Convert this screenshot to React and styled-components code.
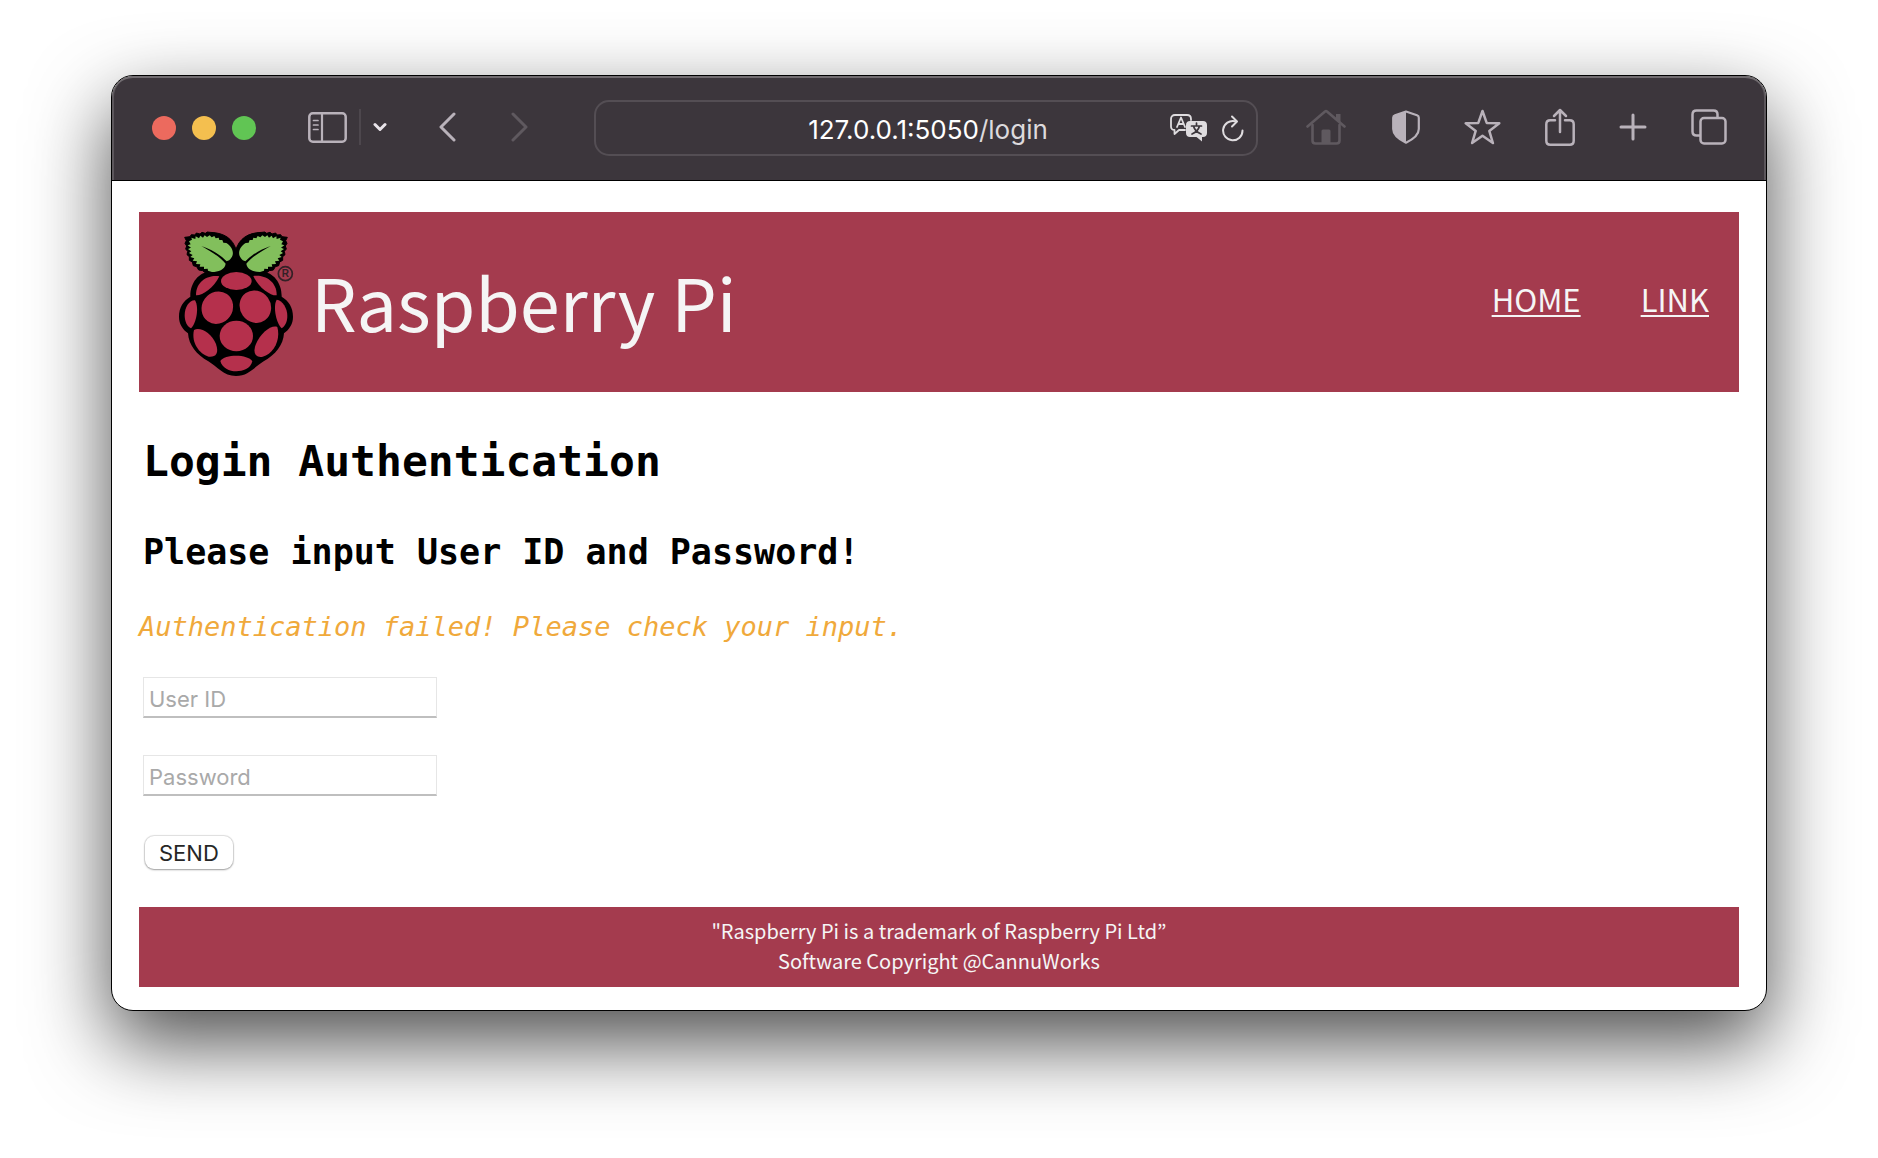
import React from "react";
import styled, { createGlobalStyle } from "styled-components";

const App = () => {
  return (
    <>
      <GlobalStyle />
      <Desktop>
        <Window>
          <Toolbar>
            <WindowButtons>
              <WindowButton type="button" aria-label="Close" $color="#ec6a5e" />
              <WindowButton type="button" aria-label="Minimize" $color="#f4bf4f" />
              <WindowButton type="button" aria-label="Zoom" $color="#61c554" />
            </WindowButtons>

            <SidebarGroup>
              <IconButton type="button" aria-label="Show sidebar">
                <SidebarIcon />
              </IconButton>
              <Divider />
              <IconButton type="button" aria-label="Tab groups" $color="#e9e4ea">
                <svg width="14" height="10" viewBox="0 0 14 10">
                  <Line d="M2 2.500l5 5 5-5" strokeWidth="3" />
                </svg>
              </IconButton>
            </SidebarGroup>

            <HistoryGroup>
              <IconButton type="button" aria-label="Back">
                <svg width="17" height="30" viewBox="0 0 17 30">
                  <Line d="M15 2L2 15l13 13" strokeWidth="3" />
                </svg>
              </IconButton>
              <IconButton type="button" aria-label="Forward" $color="#5f595f">
                <svg width="17" height="30" viewBox="0 0 17 30">
                  <Line d="M2 2l13 13L2 28" strokeWidth="3" />
                </svg>
              </IconButton>
            </HistoryGroup>

            <AddressBar>
              <Address type="button">
                127.0.0.1:5050<AddressPath>/login</AddressPath>
              </Address>
              <AddressActions>
                <IconButton type="button" aria-label="Translate" $color="#dfdcdf">
                  <TranslateIcon />
                </IconButton>
                <IconButton type="button" aria-label="Reload" $color="#dfdcdf">
                  <ReloadIcon />
                </IconButton>
              </AddressActions>
            </AddressBar>

            <ToolGroup>
              <IconButton type="button" aria-label="Home" $color="#5f595f">
                <HomeIcon />
              </IconButton>
              <IconButton type="button" aria-label="Privacy report">
                <ShieldIcon />
              </IconButton>
              <IconButton type="button" aria-label="Bookmarks">
                <StarIcon />
              </IconButton>
              <IconButton type="button" aria-label="Share">
                <ShareIcon />
              </IconButton>
              <IconButton type="button" aria-label="New tab">
                <svg width="28" height="28" viewBox="0 0 28 28">
                  <Line d="M14 2v24M2 14h24" strokeWidth="3" />
                </svg>
              </IconButton>
              <IconButton type="button" aria-label="Show tabs">
                <TabsIcon />
              </IconButton>
            </ToolGroup>
          </Toolbar>

          <Page>
            <Header>
              <Brand>
                <RaspberryLogo />
                <BrandName>Raspberry Pi</BrandName>
              </Brand>
              <Nav>
                <NavLink href="#home">HOME</NavLink>
                <NavLink href="#link">LINK</NavLink>
              </Nav>
            </Header>

            <Content>
              <Title>Login Authentication</Title>
              <SubTitle>Please input User ID and Password!</SubTitle>
              <ErrorText>Authentication failed! Please check your input.</ErrorText>
              <Form onSubmit={(e) => e.preventDefault()}>
                <Field type="text" placeholder="User ID" aria-label="User ID" />
                <Field type="password" placeholder="Password" aria-label="Password" />
                <SendBtn type="submit">SEND</SendBtn>
              </Form>
            </Content>

            <Footer>
              <p>"Raspberry Pi is a trademark of Raspberry Pi Ltd”</p>
              <p>Software Copyright @CannuWorks</p>
            </Footer>
          </Page>
        </Window>
      </Desktop>
    </>
  );
};

const Line = (props) => (
  <path
    fill="none"
    stroke="currentColor"
    strokeWidth="2.200"
    strokeLinecap="round"
    strokeLinejoin="round"
    {...props}
  />
);

const SidebarIcon = () => (
  <svg width="39" height="31" viewBox="0 0 39 31">
    <rect x="1.300" y="1.300" width="36.400" height="28.400" rx="3.500" fill="none" stroke="currentColor" strokeWidth="2.500" />
    <Line d="M14 1v29" />
    <Line d="M5.500 8.500h4.500M5.500 13h4.500M5.500 17.500h4.500" strokeWidth="1.700" />
  </svg>
);

const TranslateIcon = () => (
  <svg width="38" height="28" viewBox="0 0 38 28">
    <Line d="M15 16H9l-4.500 4V16C2 16 1 14.500 1 12.500V5C1 2.500 2.500 1 5 1h12c2.500 0 4 1.500 4 4v1" strokeWidth="1.800" />
    <Line d="M7 13l4-9.500 4 9.500M8.500 10h5" strokeWidth="1.800" />
    <path
      d="M20 7h13c2.500 0 4 1.500 4 4v8c0 2.500-1.500 4-4 4h-1v4.500L26.500 23H20c-2.500 0-4-1.500-4-4v-8c0-2.500 1.500-4 4-4z"
      fill="currentColor"
    />
    <path
      d="M26.500 9v2.500M21.500 12h10M23.500 12c1 4 4 6.500 7.500 8M29.500 12c-1 4-4 6.500-7.500 8"
      fill="none"
      stroke="#3c363c"
      strokeWidth="1.700"
      strokeLinecap="round"
    />
  </svg>
);

const ReloadIcon = () => (
  <svg width="22" height="27" viewBox="0 0 22 27">
    <Line d="M13 6.200A9.700 9.700 0 1 0 20.500 15.500" strokeWidth="2" />
    <Line d="M10 1.500l5 5-5 5" strokeWidth="2" />
  </svg>
);

const HomeIcon = () => (
  <svg width="42" height="36" viewBox="0 0 42 36">
    <Line d="M1.500 17.500L19 2.500q1-.8 2 0l17.500 15" strokeWidth="2.600" />
    <Line d="M6.500 16v15.500q0 3 3 3h21q3 0 3-3V16" strokeWidth="2.600" />
    <path d="M30 5h4.500v10L30 11z" fill="currentColor" />
    <path d="M15.500 34V22q0-1.500 1.500-1.500h6q1.500 0 1.500 1.500v12z" fill="currentColor" />
  </svg>
);

const ShieldIcon = () => (
  <svg width="28" height="34" viewBox="0 0 28 34">
    <Line d="M14 1.500l11 3.700q1.800.6 1.800 2.500V19q0 7.500-12.800 13.700Q1.200 26.500 1.200 19V7.700q0-1.900 1.800-2.500z" />
    <path d="M14 1.500L3 5.200q-1.800.6-1.800 2.500V19q0 7.500 12.800 13.700z" fill="currentColor" />
  </svg>
);

const StarIcon = () => (
  <svg width="37" height="36" viewBox="0 0 37 36">
    <Line
      d="M18.500 2l4.200 11.900 12.600.3-10 7.700 3.600 12.100-10.400-7.200-10.400 7.200 3.600-12.100-10-7.700 12.600-.3z"
      strokeWidth="2.500"
    />
  </svg>
);

const ShareIcon = () => (
  <svg width="30" height="38" viewBox="0 0 30 38">
    <Line d="M10 12.300H5.300q-4 0-4 4v16.400q0 4 4 4h19.400q4 0 4-4V16.300q0-4-4-4H20" strokeWidth="2.500" />
    <Line d="M15 24V2M9 8l6-6 6 6" strokeWidth="2.500" />
  </svg>
);

const TabsIcon = () => (
  <svg width="36" height="36" viewBox="0 0 36 36">
    <rect x="9.500" y="9" width="25" height="25.500" rx="3.500" fill="none" stroke="currentColor" strokeWidth="2.500" />
    <Line d="M9 26.500H5.500q-4 0-4-4v-17q0-4 4-4h17q4 0 4 4V9" strokeWidth="2.500" strokeLinecap="butt" />
  </svg>
);

const RaspberryLogo = () => (
  <Logo viewBox="147 96 342 432" role="img" aria-label="Raspberry Pi logo">
    {/* berry body */}
    <path
      d="M318 196C300 214 270 216 240 214C205 218 180 250 181 290C160 302 147 322 147 350C147 372 158 388 174 400C176 435 200 465 235 484C262 500 280 528 318 528C356 528 374 500 401 484C436 465 460 435 462 400C478 388 489 372 489 350C489 322 476 302 455 290C456 250 431 218 396 214C366 216 336 214 318 196Z"
    />
    {/* leaves */}
    <path
      d="M318 148C308 118 285 98 240 97L232 96L226 100L216 97L210 102L199 99L195 105L184 104L180 110L164 112L169 122L165 130L170 138L167 147L173 154L171 164L178 170L178 181L187 186L190 197L200 200L206 210L218 212L228 220L318 224L408 220L418 212L430 210L436 200L446 197L449 186L458 181L458 170L465 164L463 154L469 147L466 138L471 130L467 122L472 112L456 110L452 104L441 105L437 99L426 102L420 97L410 100L404 96L396 97C351 98 328 118 318 148Z"
      stroke="#000"
      strokeWidth="3"
      strokeLinejoin="round"
    />
    <LeafShape />
    <g transform="translate(636 0) scale(-1 1)">
      <LeafShape />
    </g>
    {/* drupelets */}
    <g fill="#b5304c">
      <ellipse cx="319" cy="243" rx="46" ry="27" />
      <ellipse cx="262" cy="323" rx="46" ry="50" transform="rotate(35 262 323)" />
      <ellipse cx="376" cy="320" rx="46" ry="50" transform="rotate(-35 376 320)" />
      <ellipse cx="319" cy="408" rx="50" ry="46" />
      <path d="M268 229C240 223 197 240 198 286C215 288 252 264 268 229Z" />
      <path d="M370 228C398 222 441 240 440 286C423 288 386 264 370 228Z" />
      <path d="M195 301C178 300 164 322 164 345C164 366 172 380 183 385C199 370 208 322 195 301Z" />
      <path d="M440 299C458 301 472 325 472 347C472 367 464 379 455 385C439 370 428 320 440 299Z" />
      <path d="M192 390C210 380 244 398 258 432C268 462 256 472 236 470C208 462 183 428 192 390Z" />
      <path d="M442 381C424 374 392 398 377 434C367 462 380 474 398 470C430 462 453 420 442 381Z" />
      <path d="M271 483C284 462 354 462 367 484C362 506 338 514 319 514C298 514 276 504 271 483Z" />
    </g>
    <circle cx="466" cy="221" r="21" fill="none" stroke="#332026" strokeWidth="5" />
    <Registered x="466" y="232" textAnchor="middle">
      R
    </Registered>
  </Logo>
);

const LeafShape = () => (
  <path
    d="M177 124L186 119L184 113L196 117L197 109L207 115L211 107L219 113L224 106L231 111L239 106L245 112L253 108L257 115L266 113L268 120L277 120L280 128L289 129C308 140 313 160 305 172C300 180 295 183 290 184C272 165 244 148 214 138C244 155 272 172 287 191C284 210 265 215 246 216L234 212L233 206L222 207L222 200L209 200L211 193L198 192L201 184L188 182L193 175L181 171L188 165L177 159L184 154L174 147L183 143L173 136L182 133Z"
    fill="#82bf5c"
  />
);

const GlobalStyle = createGlobalStyle`
  * {
    box-sizing: border-box;
    margin: 0;
  }

  body {
    background: #fff;
    font-family: "Noto Sans CJK JP", "Noto Sans", sans-serif;
  }
`;

const Desktop = styled.div`
  padding: 75px 111px 147px;
`;

const Window = styled.div`
  border: 1px solid #000;
  border-radius: 22px;
  background: #fff;
  overflow: hidden;
  box-shadow: 0 32px 80px rgba(0, 0, 0, 0.7);
`;

const Toolbar = styled.div`
  display: flex;
  align-items: center;
  height: 105px;
  padding: 0 39px 0 40px;
  background: #3c363c;
  border-bottom: 1px solid #000;
  border-radius: 21px 21px 0 0;
  box-shadow: inset 0 2px 0 #716c70, inset 2px 0 0 #5c575c, inset -2px 0 0 #5c575c;
`;

const WindowButtons = styled.div`
  display: flex;
  gap: 16px;
`;

const WindowButton = styled.button`
  width: 24px;
  height: 24px;
  padding: 0;
  border: none;
  border-radius: 50%;
  background: ${(props) => props.$color};
`;

const IconButton = styled.button`
  display: flex;
  padding: 0;
  border: none;
  background: transparent;
  color: ${(props) => props.$color || "#b9b2ba"};
  cursor: pointer;
`;

const SidebarGroup = styled.div`
  display: flex;
  align-items: center;
  gap: 12px;
  margin-left: 52px;
  padding-bottom: 2px;
`;

const Divider = styled.span`
  width: 2px;
  height: 36px;
  background: #4d474d;
`;

const HistoryGroup = styled.div`
  display: flex;
  gap: 55px;
  margin-left: 52px;
  padding-bottom: 2px;
`;

const AddressBar = styled.div`
  display: grid;
  grid-template-columns: 1fr auto 1fr;
  align-items: center;
  flex: 1;
  height: 56px;
  margin: 0 48px 0 66px;
  padding: 0 12px 0 16px;
  border: 2px solid #544e54;
  border-radius: 15px;
`;

const Address = styled.button`
  grid-column: 2;
  padding: 3px 0 0;
  border: none;
  background: transparent;
  color: #fff;
  font-family: Inter, sans-serif;
  font-size: 26px;
  line-height: 32px;
`;

const AddressPath = styled.span`
  color: #dddadd;
`;

const AddressActions = styled.div`
  display: flex;
  align-items: center;
  justify-content: flex-end;
  gap: 14px;
`;

const ToolGroup = styled.div`
  display: flex;
  align-items: center;
  gap: 44px;
  padding-bottom: 2px;
`;

const Page = styled.div`
  padding: 31px 27px 23px;
`;

const Header = styled.header`
  display: flex;
  justify-content: space-between;
  align-items: center;
  height: 180px;
  padding: 0 30px 0 40px;
  background: #a43b4e;
`;

const Brand = styled.div`
  display: flex;
  align-items: center;
  gap: 18px;
  padding-top: 4px;
`;

const Logo = styled.svg`
  width: 114px;
  height: 144px;
  overflow: visible;
`;

const Registered = styled.text`
  font-family: "Liberation Sans", sans-serif;
  font-size: 30px;
  font-weight: 700;
  fill: #332026;
`;

const BrandName = styled.p`
  padding-bottom: 6px;
  color: #f5f5f5;
  font-size: 72px;
  font-weight: 400;
  line-height: 104px;
`;

const Nav = styled.nav`
  display: flex;
  gap: 60px;
  padding-bottom: 6px;
`;

const NavLink = styled.a`
  color: #f5f5f5;
  font-size: 31px;
  line-height: 48px;
  text-underline-offset: 3px;
  text-decoration-thickness: 2px;
`;

const Content = styled.main`
  padding: 41px 0 38px;
  font-family: "DejaVu Sans Mono", monospace;
`;

const Title = styled.h1`
  padding: 0 4px;
  font-size: 43px;
  line-height: 56px;
`;

const SubTitle = styled.h2`
  margin-top: 39px;
  padding: 0 4px;
  font-size: 35px;
  line-height: 48px;
`;

const ErrorText = styled.p`
  margin-top: 31px;
  color: #f0a93b;
  font-size: 27px;
  font-style: italic;
  line-height: 40px;
`;

const Form = styled.form`
  display: flex;
  flex-direction: column;
  align-items: flex-start;
  gap: 37px;
  margin-top: 30px;
  padding: 0 4px;
`;

const Field = styled.input`
  width: 294px;
  height: 41px;
  padding: 4px 5px 0;
  border: 1px solid #e6e6e6;
  border-bottom: 2px solid #bfbfbf;
  background: #fff;
  font-family: Inter, sans-serif;
  font-size: 22px;

  &::placeholder {
    color: #a9a9a9;
  }
`;

const SendBtn = styled.button`
  height: 33px;
  margin: 3px 2px 0;
  padding: 1px 14px 0;
  border: none;
  border-radius: 9px;
  background: #fff;
  box-shadow: 0 0 1px 1px rgba(0, 0, 0, 0.12), 0 1px 2px rgba(0, 0, 0, 0.3);
  color: #262626;
  font-family: Inter, sans-serif;
  font-size: 22px;
`;

const Footer = styled.footer`
  height: 80px;
  padding: 9px 0;
  background: #a43b4e;
  color: #f5f5f5;
  font-size: 20px;
  line-height: 30px;
  text-align: center;
`;

export default App;
